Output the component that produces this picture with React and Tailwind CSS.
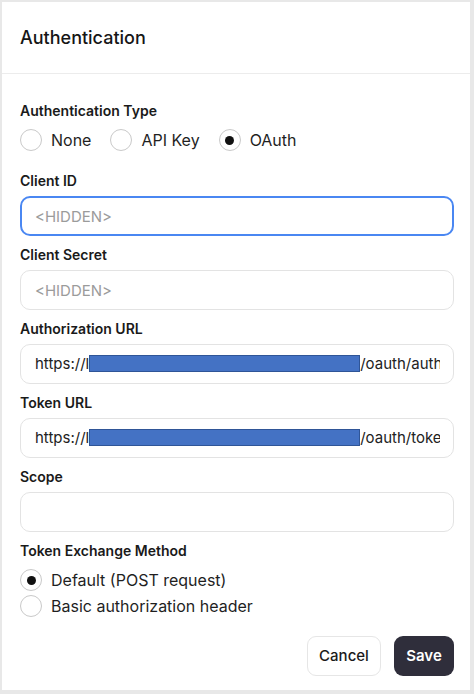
import { useState } from "react";

function Radio({ checked, label, onClick }) {
  return (
    <button type="button" onClick={onClick} className="flex items-center gap-[9px] text-[16px] text-[#1f1f1f]">
      <span className="w-[22px] h-[22px] rounded-full border-[1.5px] border-[#c9c9c9] flex items-center justify-center bg-white">
        {checked && <span className="w-[9px] h-[9px] rounded-full bg-[#111]" />}
      </span>
      <span className="leading-[22px]">{label}</span>
    </button>
  );
}

function Field({ label, children }) {
  return (
    <div className="flex flex-col">
      <label className="text-[14px] leading-[20px] font-semibold text-[#1a1a1a] mb-[5px]">{label}</label>
      {children}
    </div>
  );
}

function UrlBox({ tail }) {
  // redacted host, like the screenshot
  return (
    <div className="h-10 rounded-[10px] border border-[#e3e3e3] pl-[14px] pr-[13px] flex items-center">
      <div className="flex-1 min-w-0 overflow-hidden whitespace-nowrap text-[15px] leading-[20px] text-[#222]">
        <span>https://l</span>
        <span className="inline-block align-middle w-[271px] h-[17px] bg-[#4472c4] border border-[#2f5597] -mt-[2px]" />
        <span>{tail}</span>
      </div>
    </div>
  );
}

export default function App() {
  const [authType, setAuthType] = useState("oauth");
  const [method, setMethod] = useState("default");

  return (
    <div className="w-[474px] h-[694px] bg-[#e8e8e8] pt-[2px] pl-[2px] pr-[4px] pb-[4px]" style={{ fontFamily: "Inter, 'Noto Sans', sans-serif" }}>
      <div className="w-full h-full bg-white flex flex-col">
        <div className="h-[72px] flex items-center pl-[18px] border-b border-[#ececec]">
          <h2 className="text-[18px] font-medium text-[#161616]">Authentication</h2>
        </div>

        <div className="pl-[18px] pr-4 pt-[27px] flex flex-col">
          <div className="text-[14px] leading-[20px] font-semibold text-[#1a1a1a]">Authentication Type</div>
          <div className="flex items-center gap-[19px] mt-2">
            <Radio label="None" checked={authType === "none"} onClick={() => setAuthType("none")} />
            <Radio label="API Key" checked={authType === "api"} onClick={() => setAuthType("api")} />
            <Radio label="OAuth" checked={authType === "oauth"} onClick={() => setAuthType("oauth")} />
          </div>

          <div className="flex flex-col gap-[9px] mt-5">
            <Field label="Client ID">
              <input
                placeholder="<HIDDEN>"
                className="h-10 rounded-[10px] border-2 border-[#4a87f2] px-[13px] text-[15px] outline-none placeholder:text-[#9b9b9b]"
              />
            </Field>
            <Field label="Client Secret">
              <input
                placeholder="<HIDDEN>"
                className="h-10 rounded-[10px] border border-[#e3e3e3] px-[14px] text-[15px] outline-none placeholder:text-[#9b9b9b]"
              />
            </Field>
            <Field label="Authorization URL">
              <UrlBox tail="/oauth/authorize" />
            </Field>
            <Field label="Token URL">
              <UrlBox tail="/oauth/token" />
            </Field>
            <Field label="Scope">
              <input className="h-10 rounded-[10px] border border-[#e3e3e3] px-[14px] text-[15px] outline-none" />
            </Field>
          </div>

          <div className="text-[14px] leading-[20px] font-semibold text-[#1a1a1a] mt-[9px]">Token Exchange Method</div>
          <div className="flex flex-col gap-1 mt-[8px] items-start">
            <Radio label="Default (POST request)" checked={method === "default"} onClick={() => setMethod("default")} />
            <Radio label="Basic authorization header" checked={method === "basic"} onClick={() => setMethod("basic")} />
          </div>

          <div className="flex justify-end gap-[13px] mt-[19px]">
            <button className="h-10 w-[74px] rounded-[9px] border border-[#e6e6e6] bg-white text-[15px] font-medium text-[#1a1a1a]">Cancel</button>
            <button className="h-10 w-[60px] rounded-[9px] bg-[#2f2e3b] text-[15px] font-semibold text-white">Save</button>
          </div>
        </div>
      </div>
    </div>
  );
}
